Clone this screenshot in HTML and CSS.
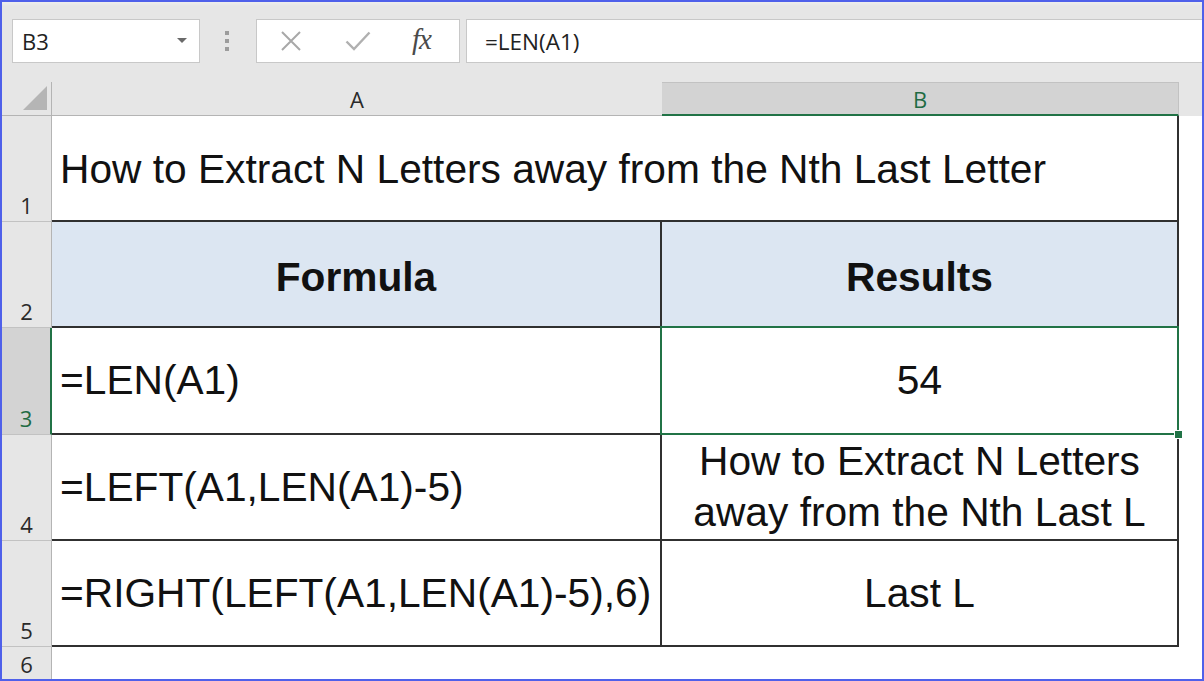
FILE: index.html
```html
<!DOCTYPE html>
<html>
<head>
<meta charset="utf-8">
<link rel="stylesheet" href="styles.css">
</head>
<body>
<div class="frame">
  <div class="toolbar">
    <div class="namebox">
      <span class="nb-text">B3</span>
      <svg class="caret" width="10" height="6" viewBox="0 0 10 6"><path d="M0 0 L10 0 L5 5 Z" fill="#6a6a6a"/></svg>
    </div>
    <div class="grip"><i></i><i></i><i></i></div>
    <div class="fxbox">
      <svg class="ic-x" width="22" height="22" viewBox="0 0 22 22"><path d="M2 2 L20 20 M20 2 L2 20" stroke="#a8a8a8" stroke-width="2" fill="none"/></svg>
      <svg class="ic-check" width="26" height="20" viewBox="0 0 26 20"><path d="M1.5 10.5 L9 18 L24.5 1.5" stroke="#b0b0b0" stroke-width="2.4" fill="none"/></svg>
      <span class="fx">fx</span>
    </div>
    <div class="formula">=LEN(A1)</div>
  </div>
  <div class="sheet">
    <div class="corner"><svg width="24" height="24" viewBox="0 0 24 24"><path d="M24 0 L24 24 L0 24 Z" fill="#b5b5b5"/></svg></div>
    <div class="colhead">A</div>
    <div class="colhead sel">B</div>
    <div class="colhead rest"></div>

    <div class="rowhead">1</div>
    <div class="cell title">How to Extract N Letters away from the Nth Last Letter</div>
    <div class="filler"></div>

    <div class="rowhead">2</div>
    <div class="cell head">Formula</div>
    <div class="cell head">Results</div>
    <div class="filler"></div>

    <div class="rowhead sel">3</div>
    <div class="cell">=LEN(A1)</div>
    <div class="cell center active">54</div>
    <div class="filler"></div>

    <div class="rowhead">4</div>
    <div class="cell">=LEFT(A1,LEN(A1)-5)</div>
    <div class="cell center wrap">How to Extract N Letters away from the Nth Last L</div>
    <div class="filler"></div>

    <div class="rowhead">5</div>
    <div class="cell">=RIGHT(LEFT(A1,LEN(A1)-5),6)</div>
    <div class="cell center">Last L</div>
    <div class="filler"></div>

    <div class="rowhead last">6</div>
    <div class="blank"></div>
    <div class="blank"></div>
    <div class="filler"></div>
  </div>
</div>
</body>
</html>
```

FILE: styles.css
```css
html, body {
  margin: 0;
  padding: 0;
}

.frame {
  width: 1204px;
  height: 681px;
  box-sizing: border-box;
  border: 2px solid #4f60ea;
  background: #e6e6e6;
  display: flex;
  flex-direction: column;
  overflow: hidden;
}

.toolbar {
  height: 80px;
  flex: none;
  box-sizing: border-box;
  display: flex;
  align-items: flex-start;
  padding: 17px 0 0 10px;
  background: linear-gradient(#eeeeee 0, #e6e6e6 4px);
}

.namebox {
  width: 188px;
  height: 44px;
  box-sizing: border-box;
  background: #fff;
  border: 1px solid #c8c8c8;
  display: flex;
  align-items: center;
  justify-content: space-between;
  padding: 0 12px 0 9px;
}

.nb-text {
  font-family: "Open Sans", "Noto Sans", sans-serif;
  font-size: 22px;
  color: #222;
}

.grip {
  width: 56px;
  height: 44px;
  display: flex;
  flex-direction: column;
  align-items: center;
  justify-content: center;
  gap: 4px;
  padding-right: 2px;
  box-sizing: border-box;
}

.grip i {
  display: block;
  width: 4px;
  height: 4px;
  background: #9c9c9c;
}

.fxbox {
  width: 204px;
  height: 44px;
  box-sizing: border-box;
  background: #fff;
  border: 1px solid #c8c8c8;
  display: flex;
  align-items: center;
  padding-left: 23px;
}

.ic-x {
  margin-right: 43px;
}

.ic-check {
  margin-right: 41px;
}

.fx {
  font-family: "Liberation Serif", serif;
  font-style: italic;
  font-size: 29px;
  color: #4a4a4a;
  letter-spacing: -1px;
  margin-top: -4px;
}

.formula {
  flex: 1;
  height: 44px;
  box-sizing: border-box;
  background: #fff;
  border: 1px solid #c8c8c8;
  border-right: none;
  margin-left: 6px;
  display: flex;
  align-items: center;
  padding-left: 18px;
  font-family: "Open Sans", "Noto Sans", sans-serif;
  font-size: 22.5px;
  color: #222;
}

.sheet {
  flex: 1;
  display: grid;
  grid-template-columns: 50px 610px 517px 1fr;
  grid-template-rows: 34px 106px 106px 107px 106px 106px 1fr;
  background: #fff;
}

.corner {
  background: #e6e6e6;
  border-right: 1px solid #b4b4b4;
  border-bottom: 1px solid #b4b4b4;
  box-sizing: border-box;
  display: flex;
  align-items: flex-end;
  justify-content: flex-end;
  padding: 0 4px 5px 0;
}

.colhead {
  background: #e6e6e6;
  border-bottom: 1px solid #b4b4b4;
  box-sizing: border-box;
  display: flex;
  align-items: center;
  justify-content: center;
  font-family: "Open Sans", "Noto Sans", sans-serif;
  font-size: 22px;
  color: #2a2a2a;
  padding-top: 1px;
}

.colhead.sel {
  background: #d3d3d3;
  border-top: 1px solid #c2c2c2;
  border-right: 1px solid #c2c2c2;
  border-bottom: 2px solid #217346;
  color: #1f6b43;
}

.colhead.rest {
  border-bottom: none;
}

.rowhead {
  background: #e6e6e6;
  border-right: 1px solid #b4b4b4;
  border-bottom: 1px solid #c2c2c2;
  box-sizing: border-box;
  display: flex;
  align-items: flex-end;
  justify-content: center;
  font-family: "Open Sans", "Noto Sans", sans-serif;
  font-size: 22px;
  line-height: 22px;
  color: #2a2a2a;
  padding-bottom: 5px;
}

.rowhead.sel {
  background: #d3d3d3;
  border-right: 2px solid #217346;
  color: #1f6b43;
}

.rowhead.last {
  border-bottom: none;
  align-items: flex-start;
  padding-top: 6px;
}

.cell {
  position: relative;
  box-sizing: border-box;
  border-right: 2px solid #303030;
  border-bottom: 2px solid #303030;
  display: flex;
  align-items: center;
  padding-left: 8px;
  font-family: "Liberation Sans", Arial, sans-serif;
  font-size: 40.7px;
  color: #111;
  background: #fff;
  white-space: nowrap;
}

.cell.title {
  grid-column: span 2;
  padding-top: 3px;
}

.cell.head {
  background: #dce6f2;
  justify-content: center;
  font-weight: bold;
  padding-left: 0;
  padding-top: 6px;
}

.cell.center {
  justify-content: center;
  padding-left: 0;
  text-align: center;
}

.cell.wrap {
  white-space: normal;
  line-height: 51px;
  padding: 0 10px;
}

.cell.active::after {
  content: "";
  position: absolute;
  left: -2px;
  top: -2px;
  right: -2px;
  bottom: -2px;
  border: 2px solid #217346;
  pointer-events: none;
}

.cell.active::before {
  content: "";
  position: absolute;
  right: -6px;
  bottom: -6px;
  width: 7px;
  height: 7px;
  background: #217346;
  border: 1px solid #fff;
  z-index: 2;
}

.filler,
.blank {
  background: #fff;
}
```
